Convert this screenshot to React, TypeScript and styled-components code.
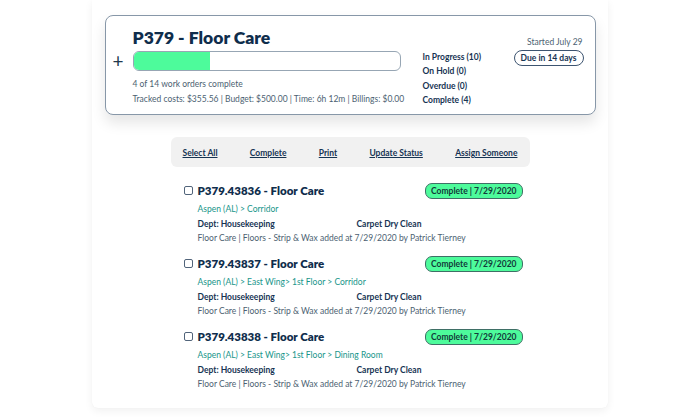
import React from "react";
import styled, { createGlobalStyle } from "styled-components";

const Global = createGlobalStyle`
  html, body { margin: 0; padding: 0; background: #ffffff; }
  body { font-family: Lato, "Noto Sans", sans-serif; color: #10304f; }
  * { box-sizing: border-box; }
`;

const Page = styled.div`
  width: 700px;
  height: 420px;
  overflow: hidden;
  display: flex;
  justify-content: center;
`;

const Panel = styled.div`
  width: 516px;
  height: 408px;
  background: #fff;
  border-radius: 0 0 6px 6px;
  box-shadow: 0 3px 8px rgba(0, 0, 0, 0.06), 0 0 1px rgba(0, 0, 0, 0.05);
  padding-top: 15px;
  display: flex;
  flex-direction: column;
  align-items: center;
`;

const Card = styled.div`
  width: 491px;
  height: 100px;
  border: 1px solid #8797a8;
  border-radius: 8px;
  background: #fff;
  box-shadow: 0 8px 14px rgba(0, 0, 0, 0.1);
  display: grid;
  grid-template-columns: 268px 1fr auto;
  column-gap: 22px;
  padding: 10px 11px 0 27px;
  position: relative;
`;

const Main = styled.div`
  display: flex;
  flex-direction: column;
  position: relative;
`;

const Title = styled.div`
  font-size: 17.5px;
  font-weight: 800;
  line-height: 22px;
  color: #0f2d4c;
  margin-top: 1px;
`;

const Plus = styled.div`
  position: absolute;
  left: -20px;
  top: 25px;
  font-size: 19px;
  line-height: 19px;
  font-weight: 400;
  color: #22384e;
`;

const Bar = styled.div`
  margin-top: 2px;
  height: 20px;
  border: 1px solid #97a6b4;
  border-radius: 6px;
  overflow: hidden;
  background: #fff;
`;

const Fill = styled.div`
  height: 100%;
  background: #4dfb9b;
`;

const Small = styled.div<{ $mt?: number }>`
  font-size: 8.5px;
  line-height: 14px;
  color: #4c5f72;
  margin-top: ${(p) => p.$mt ?? 0}px;
  white-space: nowrap;
`;

const StatusList = styled.div`
  display: flex;
  flex-direction: column;
  padding-top: 24px;
`;

const Status = styled.div`
  font-size: 8.5px;
  font-weight: 700;
  line-height: 14.4px;
  color: #163453;
`;

const Right = styled.div`
  display: flex;
  flex-direction: column;
  align-items: flex-end;
  padding-top: 10px;
`;

const Started = styled.div`
  font-size: 8.5px;
  color: #4c5f72;
  line-height: 12px;
  margin-right: 1px;
`;

const DuePill = styled.div`
  margin-top: 2px;
  font-size: 8.5px;
  font-weight: 700;
  color: #163453;
  border: 1px solid #3d5470;
  border-radius: 8px;
  padding: 0 6px;
  line-height: 14px;
`;

const Toolbar = styled.div`
  margin-top: 22px;
  width: 359px;
  height: 30px;
  background: #f1f1f1;
  border-radius: 6px;
  display: flex;
  align-items: center;
  justify-content: space-between;
  padding: 1px 12px 0;
`;

const ToolLink = styled.a`
  font-size: 8.5px;
  font-weight: 700;
  color: #163453;
  text-decoration: underline;
  cursor: pointer;
`;

const List = styled.div`
  width: 339px;
  margin-left: 6px;
  margin-top: 15px;
  display: flex;
  flex-direction: column;
  gap: 7px;
`;

const Item = styled.div`
  display: grid;
  grid-template-columns: 14px 1fr;
  height: 66px;
`;

const Check = styled.div`
  width: 9px;
  height: 9px;
  border: 1px solid #51647a;
  border-radius: 2px;
  margin-top: 4px;
`;

const Body = styled.div`
  display: flex;
  flex-direction: column;
`;

const TitleRow = styled.div`
  display: flex;
  justify-content: space-between;
  align-items: center;
  height: 17px;
`;

const ItemTitle = styled.div`
  font-size: 11.5px;
  font-weight: 800;
  color: #0f2d4c;
`;

const DonePill = styled.div`
  background: #4dfb9b;
  border: 1px solid #3f6f66;
  border-radius: 7px;
  font-size: 8.5px;
  font-weight: 700;
  color: #123a3a;
  line-height: 14px;
  padding: 0 5px;
`;

const Location = styled.div`
  font-size: 8.5px;
  color: #17958a;
  line-height: 14px;
  margin-top: 3px;
`;

const DeptRow = styled.div`
  display: grid;
  grid-template-columns: 159px 1fr;
  font-size: 8.5px;
  font-weight: 700;
  color: #163453;
  line-height: 14px;
  margin-top: 1px;
`;

const Added = styled.div`
  font-size: 8.5px;
  color: #4c5f72;
  line-height: 14px;
`;

const items = [
  { id: "P379.43836", loc: "Aspen (AL) > Corridor" },
  { id: "P379.43837", loc: "Aspen (AL) > East Wing> 1st Floor > Corridor" },
  { id: "P379.43838", loc: "Aspen (AL) > East Wing> 1st Floor > Dining Room" },
];

export default function App() {
  return (
    <>
      <Global />
      <Page>
        <Panel>
          <Card>
            <Main>
              <Plus>+</Plus>
              <Title>P379 - Floor Care</Title>
              <Bar>
                <Fill style={{ width: `${(4 / 14) * 100}%` }} />
              </Bar>
              <Small $mt={6}>4 of 14 work orders complete</Small>
              <Small $mt={1}>
                Tracked costs: $355.56 | Budget: $500.00 | Time: 6h 12m | Billings: $0.00
              </Small>
            </Main>
            <StatusList>
              <Status>In Progress (10)</Status>
              <Status>On Hold (0)</Status>
              <Status>Overdue (0)</Status>
              <Status>Complete (4)</Status>
            </StatusList>
            <Right>
              <Started>Started July 29</Started>
              <DuePill>Due in 14 days</DuePill>
            </Right>
          </Card>
          <Toolbar>
            <ToolLink>Select All</ToolLink>
            <ToolLink>Complete</ToolLink>
            <ToolLink>Print</ToolLink>
            <ToolLink>Update Status</ToolLink>
            <ToolLink>Assign Someone</ToolLink>
          </Toolbar>
          <List>
            {items.map((it) => (
              <Item key={it.id}>
                <Check />
                <Body>
                  <TitleRow>
                    <ItemTitle>{it.id} - Floor Care</ItemTitle>
                    <DonePill>Complete | 7/29/2020</DonePill>
                  </TitleRow>
                  <Location>{it.loc}</Location>
                  <DeptRow>
                    <span>Dept: Housekeeping</span>
                    <span>Carpet Dry Clean</span>
                  </DeptRow>
                  <Added>Floor Care | Floors - Strip &amp; Wax added at 7/29/2020 by Patrick Tierney</Added>
                </Body>
              </Item>
            ))}
          </List>
        </Panel>
      </Page>
    </>
  );
}
